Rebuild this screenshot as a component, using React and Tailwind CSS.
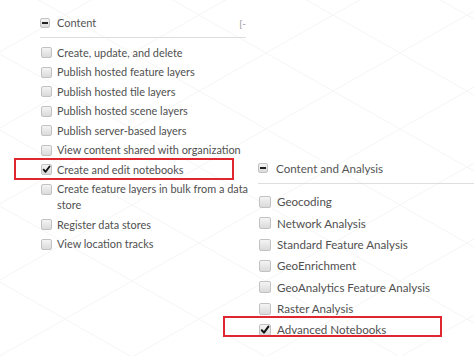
import React from "react";

const font = { fontFamily: "Lato, 'Open Sans', sans-serif" };

function Box({ checked, minus, size = 11, className = "" }) {
  return (
    <span
      className={"flex shrink-0 items-center justify-center rounded-[2px] border border-[#c2c2c2] bg-gradient-to-b from-[#f4f4f4] to-[#dadada] " + className}
      style={{ width: size, height: size }}
    >
      {checked && (
        <svg width={size - 2} height={size - 2} viewBox="0 0 10 10">
          <path d="M1.8 5.2 L4 7.6 L8.4 1.6" fill="none" stroke="#111" strokeWidth="2" strokeLinecap="round" strokeLinejoin="round" />
        </svg>
      )}
      {minus && <span className="block h-[2px] w-[6px] bg-[#222]" />}
    </span>
  );
}

function Watermark() {
  return (
    <svg className="absolute inset-0 pointer-events-none" width="474" height="356">
      <defs>
        <pattern id="dia" width="134" height="76" patternUnits="userSpaceOnUse" patternTransform="translate(65,-23)">
          <path d="M67 0 L134 38 L67 76 L0 38 Z" fill="none" stroke="#f5f5f5" strokeWidth="1" />
        </pattern>
      </defs>
      <rect width="474" height="356" fill="url(#dia)" />
    </svg>
  );
}

const leftItems = [
  { t: "Create, update, and delete" },
  { t: "Publish hosted feature layers" },
  { t: "Publish hosted tile layers" },
  { t: "Publish hosted scene layers" },
  { t: "Publish server-based layers" },
  { t: "View content shared with organization" },
  { t: "Create and edit notebooks", checked: true, hl: true },
  { t: "Create feature layers in bulk from a data store" },
  { t: "Register data stores" },
  { t: "View location tracks" },
];

const rightItems = [
  { t: "Geocoding" },
  { t: "Network Analysis" },
  { t: "Standard Feature Analysis" },
  { t: "GeoEnrichment" },
  { t: "GeoAnalytics Feature Analysis" },
  { t: "Raster Analysis" },
  { t: "Advanced Notebooks", checked: true, hl: true },
];

export default function App() {
  return (
    <div className="relative h-[356px] w-[474px] overflow-hidden bg-white text-[#505050]" style={font}>
      <Watermark />
      <div className="relative flex items-start">
        {/* Left panel */}
        <div className="ml-[40px] mt-[15px] w-[206px]">
          <div className="flex items-center border-b border-[#dedede] pb-[6px] leading-[16px]">
            <Box minus size={10} />
            <span className="ml-[7px] text-[11px] text-[#555]">Content</span>
            <span className="ml-auto text-[10px] text-[#999]">[-</span>
          </div>
          <div className="flex w-[212px] flex-col gap-y-[3.5px] pt-[6.5px]">
            {leftItems.map((it) => (
              <div key={it.t} className="relative flex items-start pl-[1px] text-[10.9px] leading-[16px]">
                <Box checked={it.checked} size={11} className="mt-[2.5px]" />
                <span className="ml-[5px]">{it.t}</span>
                {it.hl && (
                  <span className="absolute left-[-26px] top-[-4px] h-[22px] w-[220px] border-2 border-[#e0262e]" />
                )}
              </div>
            ))}
          </div>
        </div>
        {/* Right panel */}
        <div className="ml-[12px] mt-[159.5px] flex-1">
          <div className="flex items-center border-b border-[#dedede] pb-[6px] leading-[17px]">
            <Box minus size={10} />
            <span className="ml-[8px] text-[11.6px] text-[#555]">Content and Analysis</span>
          </div>
          <div className="flex flex-col pt-[8px]">
            {rightItems.map((it) => (
              <div key={it.t} className="relative flex h-[21.3px] items-center pl-[1px] text-[11.6px]">
                <Box checked={it.checked} size={12} />
                <span className="ml-[6px]">{it.t}</span>
                {it.hl && (
                  <span className="absolute left-[-35px] top-[-3.5px] h-[21px] w-[219px] border-2 border-[#e0262e]" />
                )}
              </div>
            ))}
          </div>
        </div>
      </div>
    </div>
  );
}
